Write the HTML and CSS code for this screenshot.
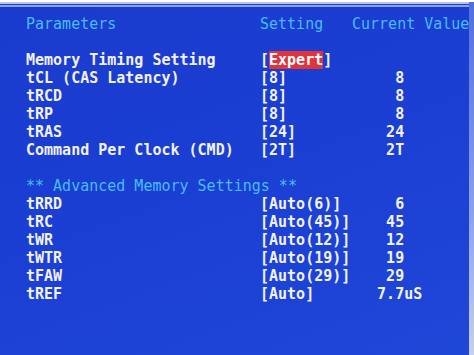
FILE: index.html
```html
<!DOCTYPE html>
<html>
<head>
<meta charset="utf-8">
<link rel="stylesheet" href="styles.css">
</head>
<body>
<div class="screen">
  <div class="topline"></div>
  <div class="content">
    <div class="row head"><span class="c1">Parameters</span><span class="c2">Setting</span><span class="c3">Current Value</span></div>
    <div class="row blank"></div>
    <div class="row"><span class="c1">Memory Timing Setting</span><span class="c2">[<span class="sel">Expert</span>]</span><span class="c3"></span></div>
    <div class="row"><span class="c1">tCL (CAS Latency)</span><span class="c2">[8]</span><span class="c3">     8</span></div>
    <div class="row"><span class="c1">tRCD</span><span class="c2">[8]</span><span class="c3">     8</span></div>
    <div class="row"><span class="c1">tRP</span><span class="c2">[8]</span><span class="c3">     8</span></div>
    <div class="row"><span class="c1">tRAS</span><span class="c2">[24]</span><span class="c3">    24</span></div>
    <div class="row"><span class="c1">Command Per Clock (CMD)</span><span class="c2">[2T]</span><span class="c3">    2T</span></div>
    <div class="row blank"></div>
    <div class="row head"><span class="c1 wide">** Advanced Memory Settings **</span></div>
    <div class="row"><span class="c1">tRRD</span><span class="c2">[Auto(6)]</span><span class="c3">     6</span></div>
    <div class="row"><span class="c1">tRC</span><span class="c2">[Auto(45)]</span><span class="c3">    45</span></div>
    <div class="row"><span class="c1">tWR</span><span class="c2">[Auto(12)]</span><span class="c3">    12</span></div>
    <div class="row"><span class="c1">tWTR</span><span class="c2">[Auto(19)]</span><span class="c3">    19</span></div>
    <div class="row"><span class="c1">tFAW</span><span class="c2">[Auto(29)]</span><span class="c3">    29</span></div>
    <div class="row"><span class="c1">tREF</span><span class="c2">[Auto]</span><span class="c3">   7.7uS</span></div>
  </div>
  <div class="edge"></div>
</div>
</body>
</html>
```
FILE: styles.css
```css
html, body {
  margin: 0;
  padding: 0;
  width: 474px;
  height: 355px;
  overflow: hidden;
}
.screen {
  position: relative;
  width: 474px;
  height: 355px;
  background: linear-gradient(160deg, #1a3bce 0%, #1b3fd3 50%, #1f47d8 100%);
  font-family: "DejaVu Sans Mono", "Liberation Mono", monospace;
  font-size: 15px;
}
.topline {
  height: 2px;
  margin-top: 2px;
  background: #b8c4f2;
  box-shadow: 0 3px 0 #8ea2ea;
}
.content {
  padding: 11px 0 0 26px;
}
.row {
  display: flex;
  height: 18px;
  line-height: 18px;
  white-space: pre;
  color: #f2f2ff;
  font-weight: bold;
}
.row .c1 { width: 234px; }
.row .c2 { width: 90px; }
.row .c3 { width: 120px; }
.row .c1.wide { width: auto; }
.row.head {
  color: #48bcf4;
  font-weight: normal;
}
.row.head .c3 { padding-left: 2px; }
.sel {
  background: #e2323a;
  color: #ffffff;
}
.edge {
  position: absolute;
  top: 0;
  right: 0;
  width: 5px;
  height: 355px;
  background: linear-gradient(180deg, #4f6fdc 0%, #8ea2ea 60%, #c7d0f0 100%);
}
```
